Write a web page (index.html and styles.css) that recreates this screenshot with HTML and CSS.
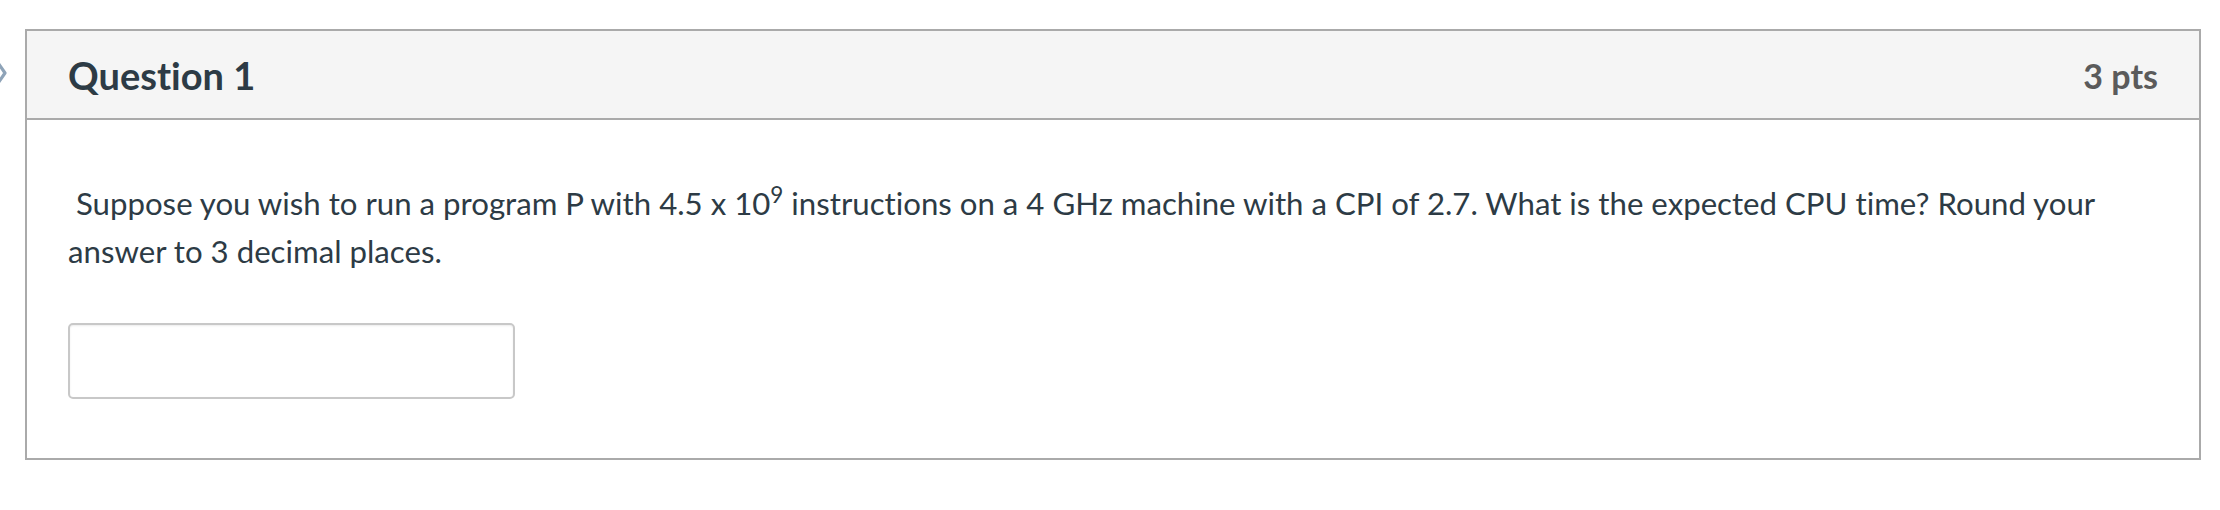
FILE: index.html
```html
<!DOCTYPE html>
<html lang="en">
<head>
<meta charset="utf-8">
<title>Question 1</title>
<link rel="stylesheet" href="styles.css">
</head>
<body>
<svg class="nav-marker" width="14" height="30" viewBox="0 0 14 30" aria-hidden="true">
  <polyline points="2,2 11,15 2,28" fill="none" stroke="#8ea3b8" stroke-width="3.2" stroke-linejoin="round" stroke-linecap="round"/>
</svg>
<div class="question">
  <div class="question-header">
    <h2 class="question-title">Question 1</h2>
    <span class="question-points">3 pts</span>
  </div>
  <div class="question-body">
    <p class="question-text">&nbsp;Suppose you wish to run a program P with 4.5 x 10<sup class="exp">9</sup> instructions on a 4 GHz machine with a CPI of 2.7. What is the expected CPU time? Round your answer to 3 decimal places.</p>
    <input class="answer-input" type="text" aria-label="Answer">
  </div>
</div>
</body>
</html>
```

FILE: styles.css
```css
html, body {
  margin: 0;
  padding: 0;
  background: #ffffff;
}

body {
  position: relative;
  font-family: Lato, "Noto Sans", "Liberation Sans", sans-serif;
  font-variant-ligatures: none;
  color: #2d3b45;
  width: 2220px;
  height: 510px;
  overflow: hidden;
}

.nav-marker {
  position: absolute;
  left: -6px;
  top: 58px;
}

.question {
  margin: 29px 0 0 25px;
  width: 2176px;
  box-sizing: border-box;
  border: 2px solid #aaaaaa;
  background: #ffffff;
}

.question-header {
  display: flex;
  align-items: center;
  justify-content: space-between;
  height: 89px;
  box-sizing: border-box;
  padding: 0 41px;
  background: #f5f5f5;
  border-bottom: 2px solid #aaaaaa;
}

.question-title {
  margin: 0;
  font-size: 38px;
  font-weight: 700;
  color: #2d3b45;
  line-height: 1;
  font-variant-ligatures: none;
}

.question-points {
  font-size: 34px;
  font-weight: 700;
  color: #5b5b5b;
  line-height: 1;
  padding-top: 2px;
}

.question-body {
  padding: 59px 41px 59px 41px;
}

.question-text {
  margin: 0 0 48px 0;
  font-size: 31.2px;
  line-height: 48px;
  color: #2d3b45;
}

.exp {
  font-size: 0.72em;
  line-height: 0;
  vertical-align: 0.55em;
}

.answer-input {
  display: block;
  width: 447px;
  height: 76px;
  box-sizing: border-box;
  margin: 0;
  border: 2px solid #c8c8c8;
  border-radius: 5px;
  background: #ffffff;
  box-shadow: inset 0 1px 2px rgba(0, 0, 0, 0.08);
  font-family: Lato, "Noto Sans", sans-serif;
  font-size: 29px;
  padding: 0 12px;
  outline: none;
}
```
